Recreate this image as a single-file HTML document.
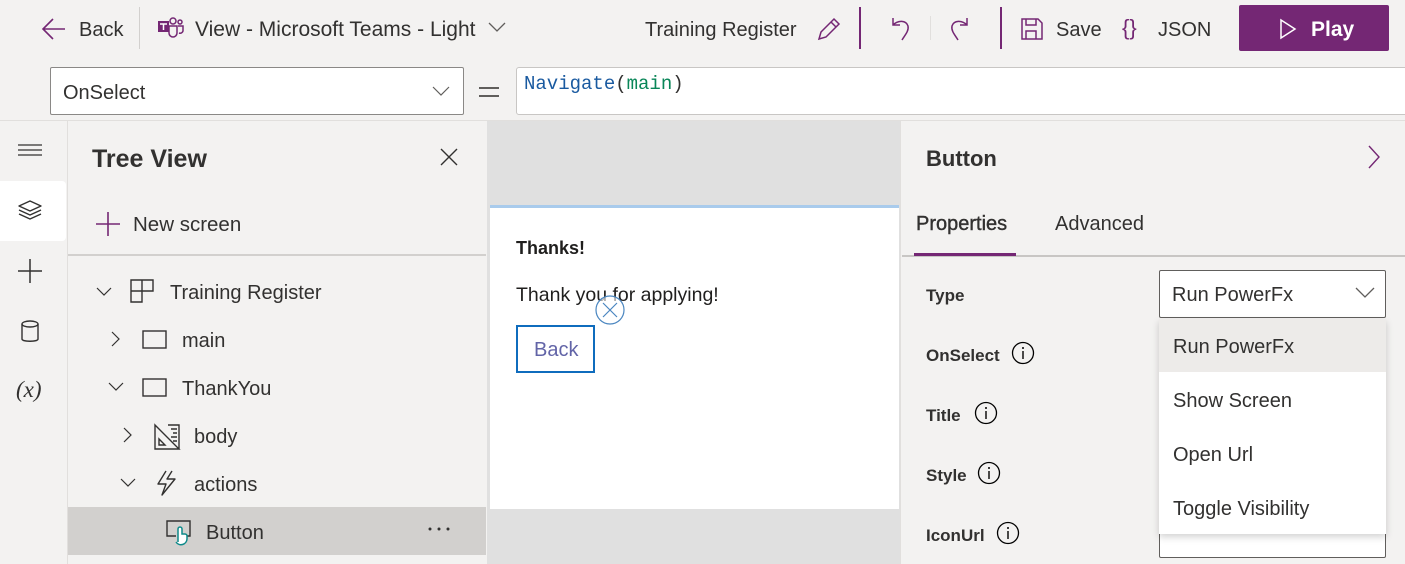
<!DOCTYPE html>
<html><head><meta charset="utf-8"><style>
*{margin:0;padding:0;box-sizing:border-box}
body{width:1405px;height:564px;overflow:hidden;background:#f3f2f1;font-family:"Liberation Sans","DejaVu Sans",sans-serif;color:#323130;position:relative}
.a{position:absolute;white-space:nowrap}
svg{position:absolute;overflow:visible}
</style></head><body>
<!-- top bar -->
<svg style="left:42px;top:18px" width="24" height="22"><path d="M1 11H23M11 1L1 11L11 21" stroke="#742774" stroke-width="1.6" fill="none"/></svg>
<div class="a" style="left:79px;top:19px;font-size:20px">Back</div>
<div class="a" style="left:139px;top:7px;width:1px;height:42px;background:#d2d0ce"></div>
<svg style="left:158px;top:17px" width="26" height="22"><rect x="0" y="4" width="11" height="11" fill="#742774"/><path d="M2 7h7M5.5 7v6" stroke="#fff" stroke-width="1.5"/><circle cx="15" cy="4" r="3" fill="none" stroke="#742774" stroke-width="1.5"/><circle cx="22" cy="5" r="2" fill="none" stroke="#742774" stroke-width="1.5"/><path d="M11 9h8v7a4 4 0 0 1-8 0zM20 9h5v5a3 3 0 0 1-4 2" fill="none" stroke="#742774" stroke-width="1.5"/></svg>
<div class="a" style="left:195px;top:18px;font-size:21px">View - Microsoft Teams - Light</div>
<svg style="left:488px;top:22px" width="18" height="10"><path d="M1 1L9 9L17 1" stroke="#605e5c" stroke-width="1.3" fill="none"/></svg>
<div class="a" style="left:645px;top:19px;font-size:20px">Training Register</div>
<svg style="left:816px;top:16px" width="26" height="26"><path d="M3 23L5 16L18 3L23 8L10 21Z M15 6L20 11" stroke="#742774" stroke-width="1.5" fill="none"/></svg>
<div class="a" style="left:859px;top:7px;width:2px;height:42px;background:#742774"></div>
<svg style="left:890px;top:16px" width="22" height="26"><path d="M3 2V9H10M3 9C8 4 16 4 18 10C19 15 15 19 12 24" stroke="#742774" stroke-width="1.5" fill="none"/></svg>
<div class="a" style="left:930px;top:16px;width:1px;height:24px;background:#e1dfdd"></div>
<svg style="left:948px;top:16px" width="22" height="26"><path d="M19 2V9H12M19 9C14 4 6 4 4 10C3 15 7 19 10 24" stroke="#742774" stroke-width="1.5" fill="none"/></svg>
<div class="a" style="left:1000px;top:7px;width:2px;height:42px;background:#742774"></div>
<svg style="left:1021px;top:18px" width="22" height="22"><path d="M1 1H17L21 5V21H1Z M5 1V7H15V1 M5 21V13H15V21" stroke="#742774" stroke-width="1.5" fill="none"/></svg>
<div class="a" style="left:1056px;top:19px;font-size:20px">Save</div>
<div class="a" style="left:1122px;top:15px;font-size:22px;color:#742774">{}</div>
<div class="a" style="left:1158px;top:19px;font-size:20px">JSON</div>
<div class="a" style="left:1239px;top:5px;width:150px;height:46px;background:#742774;border-radius:2px"></div>
<svg style="left:1280px;top:19px" width="16" height="20"><path d="M1 1L15 10L1 19Z" stroke="#fff" stroke-width="1.5" fill="none"/></svg>
<div class="a" style="left:1311px;top:18px;font-size:21px;font-weight:bold;color:#fff">Play</div>
<!-- formula bar -->
<div class="a" style="left:50px;top:67px;width:414px;height:48px;background:#fff;border:1px solid #8a8886;border-radius:2px"></div>
<div class="a" style="left:63px;top:82px;font-size:20px">OnSelect</div>
<svg style="left:432px;top:86px" width="18" height="10"><path d="M1 1L9 9L17 1" stroke="#605e5c" stroke-width="1.2" fill="none"/></svg>
<div class="a" style="left:479px;top:87px;width:20px;height:2px;background:#605e5c"></div>
<div class="a" style="left:479px;top:95px;width:20px;height:2px;background:#605e5c"></div>
<div class="a" style="left:516px;top:67px;width:900px;height:48px;background:#fff;border:1px solid #c8c6c4;border-radius:3px"></div>
<div class="a" style="left:524px;top:73px;font-family:'Liberation Mono',monospace;font-size:19px;color:#1a5aa0">Navigate<span style="color:#323130">(</span><span style="color:#098658">main</span><span style="color:#323130">)</span></div>
<div class="a" style="left:0;top:120px;width:1405px;height:1px;background:#e1dfdd"></div>
<!-- left rail -->
<div class="a" style="left:67px;top:121px;width:1px;height:443px;background:#e1dfdd"></div>
<svg style="left:18px;top:144px" width="24" height="12"><path d="M0 1H24M0 6H24M0 11H24" stroke="#323130" stroke-width="1.2"/></svg>
<div class="a" style="left:0;top:181px;width:66px;height:60px;background:#fff;border-radius:0 4px 4px 0"></div>
<svg style="left:18px;top:200px" width="24" height="22"><path d="M12 1L23 6L12 11L1 6Z M1 10L12 15L23 10 M1 14L12 19L23 14" stroke="#323130" stroke-width="1.4" fill="none" stroke-linejoin="round"/></svg>
<svg style="left:18px;top:259px" width="24" height="24"><path d="M12 0V24M0 12H24" stroke="#323130" stroke-width="1.5"/></svg>
<svg style="left:20px;top:320px" width="20" height="24"><ellipse cx="10" cy="4" rx="8" ry="3" fill="none" stroke="#323130" stroke-width="1.4"/><path d="M2 4V19C2 22 18 22 18 19V4" fill="none" stroke="#323130" stroke-width="1.4"/></svg>
<div class="a" style="left:16px;top:377px;font-family:'Liberation Serif',serif;font-style:italic;font-size:23px">(<i>x</i>)</div>
<!-- tree panel -->
<div class="a" style="left:92px;top:145px;font-size:25px;font-weight:bold;color:#323130">Tree View</div>
<svg style="left:440px;top:148px" width="18" height="18"><path d="M1 1L17 17M17 1L1 17" stroke="#323130" stroke-width="1.4"/></svg>
<svg style="left:96px;top:212px" width="24" height="24"><path d="M12 0V24M0 12H24" stroke="#742774" stroke-width="1.6"/></svg>
<div class="a" style="left:133px;top:213px;font-size:20.5px">New screen</div>
<div class="a" style="left:68px;top:254px;width:418px;height:2px;background:#d2d0ce"></div>
<svg style="left:96px;top:287px" width="16" height="9"><path d="M1 1L8 8L15 1" stroke="#323130" stroke-width="1.2" fill="none"/></svg>
<svg style="left:130px;top:279px" width="24" height="24"><path d="M1 1H23V12H12V23H1Z M12 1V23 M1 12H12" stroke="#323130" stroke-width="1.4" fill="none"/></svg>
<div class="a" style="left:170px;top:282px;font-size:20px">Training Register</div>
<svg style="left:111px;top:331px" width="9" height="16"><path d="M1 1L8 8L1 15" stroke="#323130" stroke-width="1.2" fill="none"/></svg>
<svg style="left:142px;top:330px" width="26" height="20"><rect x="1" y="1" width="23" height="17" fill="none" stroke="#323130" stroke-width="1.4"/></svg>
<div class="a" style="left:182px;top:330px;font-size:20px">main</div>
<svg style="left:108px;top:382px" width="16" height="9"><path d="M1 1L8 8L15 1" stroke="#323130" stroke-width="1.2" fill="none"/></svg>
<svg style="left:142px;top:378px" width="26" height="20"><rect x="1" y="1" width="23" height="17" fill="none" stroke="#323130" stroke-width="1.4"/></svg>
<div class="a" style="left:182px;top:378px;font-size:20px">ThankYou</div>
<svg style="left:123px;top:427px" width="9" height="16"><path d="M1 1L8 8L1 15" stroke="#323130" stroke-width="1.2" fill="none"/></svg>
<svg style="left:154px;top:424px" width="26" height="26"><path d="M1 1L25 25H1Z M5 15L5 21H11Z M14 1H25V25 M17 5H23M19 9H23M17 13H23M19 17H23" stroke="#323130" stroke-width="1.4" fill="none"/></svg>
<div class="a" style="left:194px;top:426px;font-size:20px">body</div>
<svg style="left:120px;top:478px" width="16" height="9"><path d="M1 1L8 8L15 1" stroke="#323130" stroke-width="1.2" fill="none"/></svg>
<svg style="left:156px;top:470px" width="22" height="26"><path d="M10 1L2 14H10L6 25L19 9H11L16 1" stroke="#323130" stroke-width="1.4" fill="none" stroke-linejoin="round"/></svg>
<div class="a" style="left:194px;top:474px;font-size:20px">actions</div>
<div class="a" style="left:68px;top:507px;width:418px;height:48px;background:#d2d0ce"></div>
<svg style="left:166px;top:520px" width="26" height="26"><path d="M10 16H1V1H24V16H19" stroke="#323130" stroke-width="1.4" fill="none"/><path d="M12 22V9a2 2 0 0 1 4 0V14h3a2 2 0 0 1 2 2v3a6 6 0 0 1-11 3" stroke="#0e8a8a" stroke-width="1.5" fill="#fff"/></svg>
<div class="a" style="left:206px;top:522px;font-size:20px">Button</div>
<svg style="left:428px;top:527px" width="24" height="4"><circle cx="2" cy="2" r="1.5" fill="#323130"/><circle cx="11" cy="2" r="1.5" fill="#323130"/><circle cx="20" cy="2" r="1.5" fill="#323130"/></svg>
<!-- canvas -->
<div class="a" style="left:487px;top:121px;width:413px;height:443px;background:#e0e0e0"></div>
<div class="a" style="left:490px;top:205px;width:409px;height:304px;background:#fff;border-top:3px solid #a9cbec"></div>
<div class="a" style="left:516px;top:238px;font-size:18px;font-weight:bold;color:#201f1e">Thanks!</div>
<div class="a" style="left:516px;top:284px;font-size:19.5px;color:#201f1e">Thank you for applying!</div>
<svg style="left:595px;top:295px" width="30" height="30"><circle cx="15" cy="15" r="14" fill="rgba(255,255,255,.6)" stroke="#4a86c0" stroke-width="1.2"/><path d="M8 8L22 22M22 8L8 22" stroke="#4a86c0" stroke-width="1.2"/></svg>
<div class="a" style="left:516px;top:325px;width:79px;height:48px;border:2px solid #0f6cbd;background:#fff"></div>
<div class="a" style="left:534px;top:339px;font-size:20px;color:#6264a7">Back</div>
<div class="a" style="left:900px;top:121px;width:1px;height:443px;background:#e1dfdd"></div>
<!-- right panel -->
<div class="a" style="left:926px;top:146px;font-size:22px;font-weight:bold;color:#323130">Button</div>
<svg style="left:1368px;top:145px" width="12" height="24"><path d="M1 1L11 12L1 23" stroke="#742774" stroke-width="1.4" fill="none"/></svg>
<div class="a" style="left:916px;top:213px;font-size:20px;color:#323130;-webkit-text-stroke:0.4px #323130">Properties</div>
<div class="a" style="left:1055px;top:213px;font-size:20px">Advanced</div>
<div class="a" style="left:902px;top:255px;width:503px;height:2px;background:#c8c6c4"></div>
<div class="a" style="left:914px;top:253px;width:102px;height:3px;background:#742774"></div>
<div class="a" style="left:926px;top:286px;font-size:17px;font-weight:bold;color:#323130">Type</div>
<div class="a" style="left:926px;top:346px;font-size:17px;font-weight:bold;color:#323130">OnSelect</div>
<div class="a" style="left:926px;top:406px;font-size:17px;font-weight:bold;color:#323130">Title</div>
<div class="a" style="left:926px;top:466px;font-size:17px;font-weight:bold;color:#323130">Style</div>
<div class="a" style="left:926px;top:526px;font-size:17px;font-weight:bold;color:#323130">IconUrl</div>
<svg style="left:1012px;top:342px" width="24" height="24"><circle cx="11" cy="11" r="10.5" fill="none" stroke="#000" stroke-width="1.3"/><path d="M11 9V17" stroke="#000" stroke-width="1.4"/><circle cx="11" cy="6" r="1" fill="#000"/></svg>
<svg style="left:975px;top:402px" width="24" height="24"><circle cx="11" cy="11" r="10.5" fill="none" stroke="#000" stroke-width="1.3"/><path d="M11 9V17" stroke="#000" stroke-width="1.4"/><circle cx="11" cy="6" r="1" fill="#000"/></svg>
<svg style="left:978px;top:462px" width="24" height="24"><circle cx="11" cy="11" r="10.5" fill="none" stroke="#000" stroke-width="1.3"/><path d="M11 9V17" stroke="#000" stroke-width="1.4"/><circle cx="11" cy="6" r="1" fill="#000"/></svg>
<svg style="left:997px;top:522px" width="24" height="24"><circle cx="11" cy="11" r="10.5" fill="none" stroke="#000" stroke-width="1.3"/><path d="M11 9V17" stroke="#000" stroke-width="1.4"/><circle cx="11" cy="6" r="1" fill="#000"/></svg>
<div class="a" style="left:1159px;top:270px;width:227px;height:48px;background:#fff;border:1px solid #605e5c;border-radius:2px"></div>
<div class="a" style="left:1172px;top:284px;font-size:20px">Run PowerFx</div>
<svg style="left:1355px;top:287px" width="20" height="11"><path d="M1 1L10 10L19 1" stroke="#605e5c" stroke-width="1.3" fill="none"/></svg>
<div class="a" style="left:1159px;top:520px;width:227px;height:38px;background:#fff;border:1px solid #605e5c;border-radius:2px"></div>
<div class="a" style="left:1159px;top:319px;width:227px;height:215px;background:#fff;box-shadow:0 3px 7px rgba(0,0,0,.18)"></div>
<div class="a" style="left:1159px;top:319px;width:227px;height:53px;background:#edebe9"></div>
<div class="a" style="left:1173px;top:336px;font-size:20px">Run PowerFx</div>
<div class="a" style="left:1173px;top:390px;font-size:20px">Show Screen</div>
<div class="a" style="left:1173px;top:444px;font-size:20px">Open Url</div>
<div class="a" style="left:1173px;top:498px;font-size:20px">Toggle Visibility</div>
</body></html>
